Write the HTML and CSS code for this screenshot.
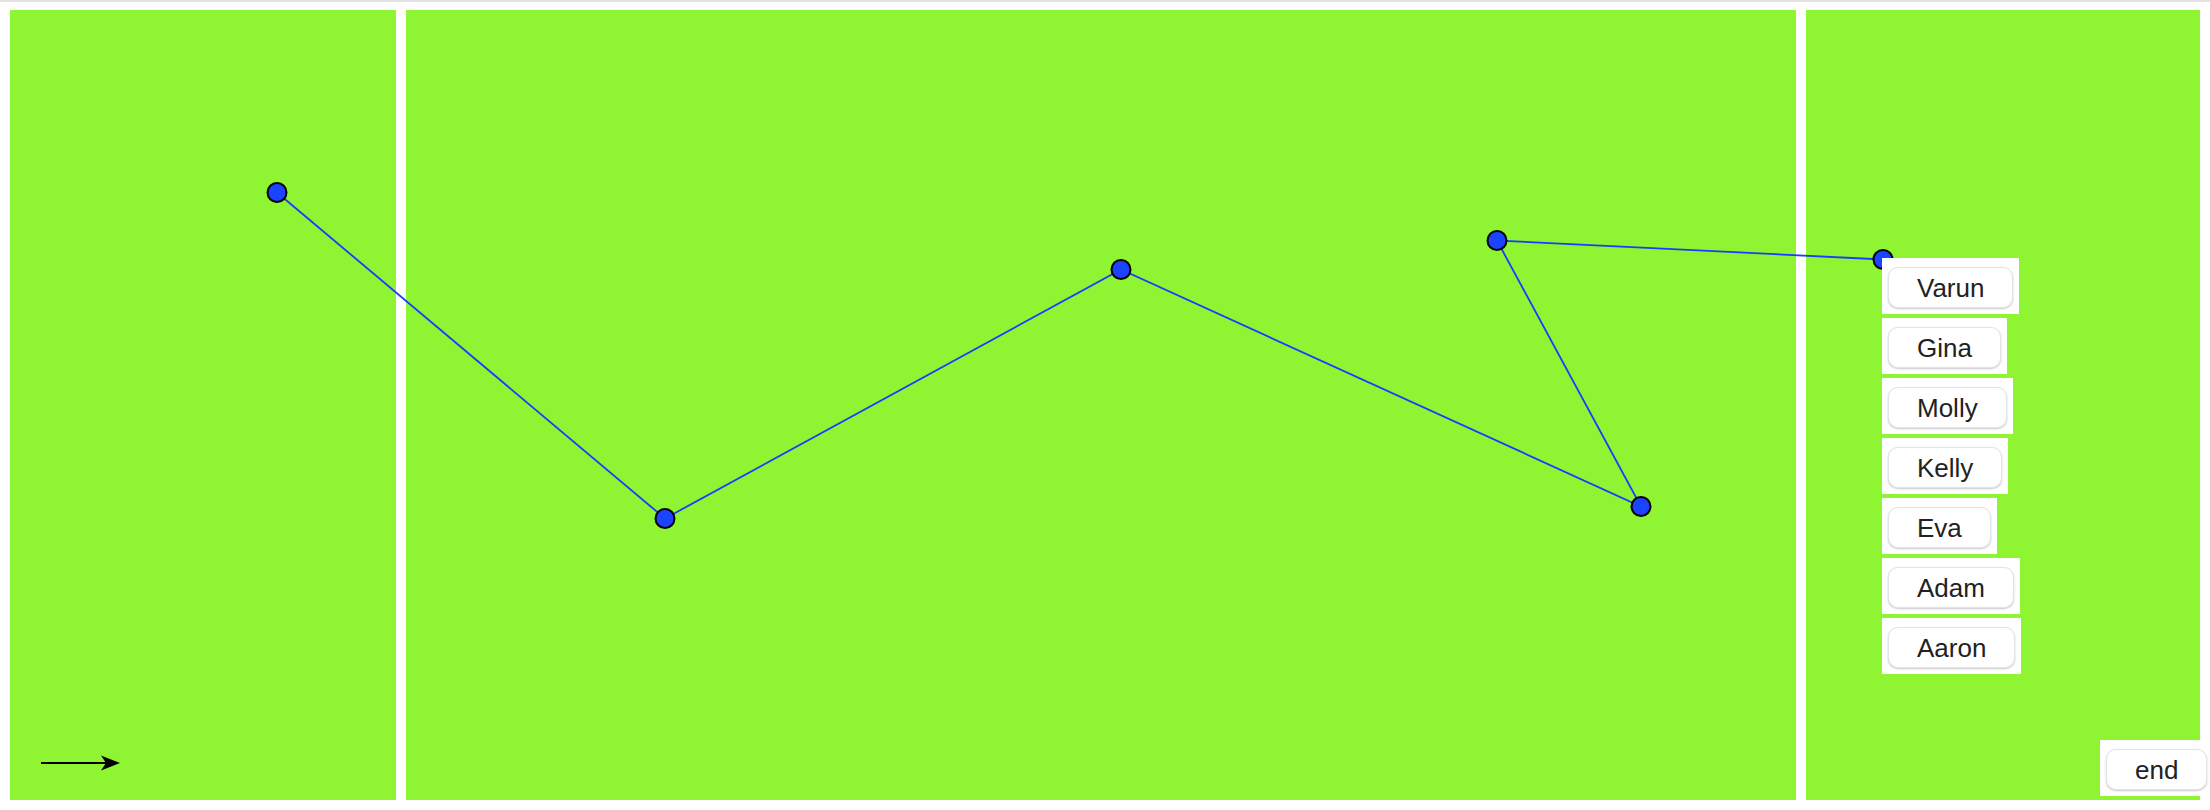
FILE: index.html
```html
<!DOCTYPE html>
<html>
<head>
<meta charset="utf-8">
<link rel="stylesheet" href="styles.css">
</head>
<body>
<div class="page">
  <div class="panels">
    <div class="panel panel-left"></div>
    <div class="panel panel-mid"></div>
    <div class="panel panel-right">
      <div class="menu">
        <div class="menu-item"><button class="btn">Varun</button></div>
        <div class="menu-item"><button class="btn">Gina</button></div>
        <div class="menu-item"><button class="btn">Molly</button></div>
        <div class="menu-item"><button class="btn">Kelly</button></div>
        <div class="menu-item"><button class="btn">Eva</button></div>
        <div class="menu-item"><button class="btn">Adam</button></div>
        <div class="menu-item"><button class="btn">Aaron</button></div>
      </div>
      <div class="end-box"><button class="btn">end</button></div>
    </div>
  </div>
  <svg class="diagram" width="2210" height="810" viewBox="0 0 2210 810">
    <polyline class="edge" points="277,190.5 665,516.5 1121,267.5 1641,504.5 1497,238.5 1883,257.5"/>
    <circle class="node" cx="277" cy="190.5" r="9.5"/>
    <circle class="node" cx="665" cy="516.5" r="9.5"/>
    <circle class="node" cx="1121" cy="267.5" r="9.5"/>
    <circle class="node" cx="1497" cy="238.5" r="9.5"/>
    <circle class="node" cx="1641" cy="504.5" r="9.5"/>
    <circle class="node" cx="1883" cy="257.5" r="9.5"/>
    <line class="arrow-line" x1="41" y1="761" x2="106" y2="761"/>
    <polygon class="arrow-head" points="101,753.5 120,761 101,768.5 106,761"/>
  </svg>
</div>
</body>
</html>
```
FILE: styles.css
```css
html, body {
  margin: 0;
  padding: 0;
  background: #ffffff;
  overflow: hidden;
}
body {
  width: 2210px;
  height: 810px;
  font-family: "Liberation Sans", Arial, sans-serif;
}
.page {
  position: relative;
  width: 2210px;
  height: 810px;
  box-sizing: border-box;
  border-top: 2px solid #e2e2e2;
  padding: 8px 10px 10px 10px;
}
.panels {
  display: grid;
  grid-template-columns: 386px 1390px 394px;
  column-gap: 10px;
  height: 790px;
}
.panel {
  background: #8ff532;
}
.panel-right {
  position: relative;
}
.diagram {
  position: absolute;
  left: 0;
  top: 0;
  z-index: 1;
  pointer-events: none;
}
.edge {
  fill: none;
  stroke: #1a3cff;
  stroke-width: 1.8;
}
.node {
  fill: #1a44ff;
  stroke: #000000;
  stroke-width: 2;
}
.arrow-line {
  stroke: #000000;
  stroke-width: 2;
}
.arrow-head {
  fill: #000000;
}
.menu {
  position: absolute;
  left: 76px;
  top: 248px;
  z-index: 2;
  display: flex;
  flex-direction: column;
  align-items: flex-start;
  gap: 4px;
}
.menu-item, .end-box {
  background: #ffffff;
  padding: 9px 6px 6px 6px;
  display: flex;
}
.end-box {
  position: absolute;
  left: 294px;
  top: 730px;
  z-index: 2;
}
.btn {
  font-family: "Liberation Sans", Arial, sans-serif;
  font-size: 26px;
  color: #222222;
  height: 41px;
  box-sizing: border-box;
  padding: 0 28px;
  margin: 0;
  background: #ffffff;
  border: 1px solid #e4e4e4;
  border-radius: 10px;
  box-shadow: 0 1px 2px rgba(0, 0, 0, 0.22);
  line-height: 1;
  white-space: nowrap;
}
```
